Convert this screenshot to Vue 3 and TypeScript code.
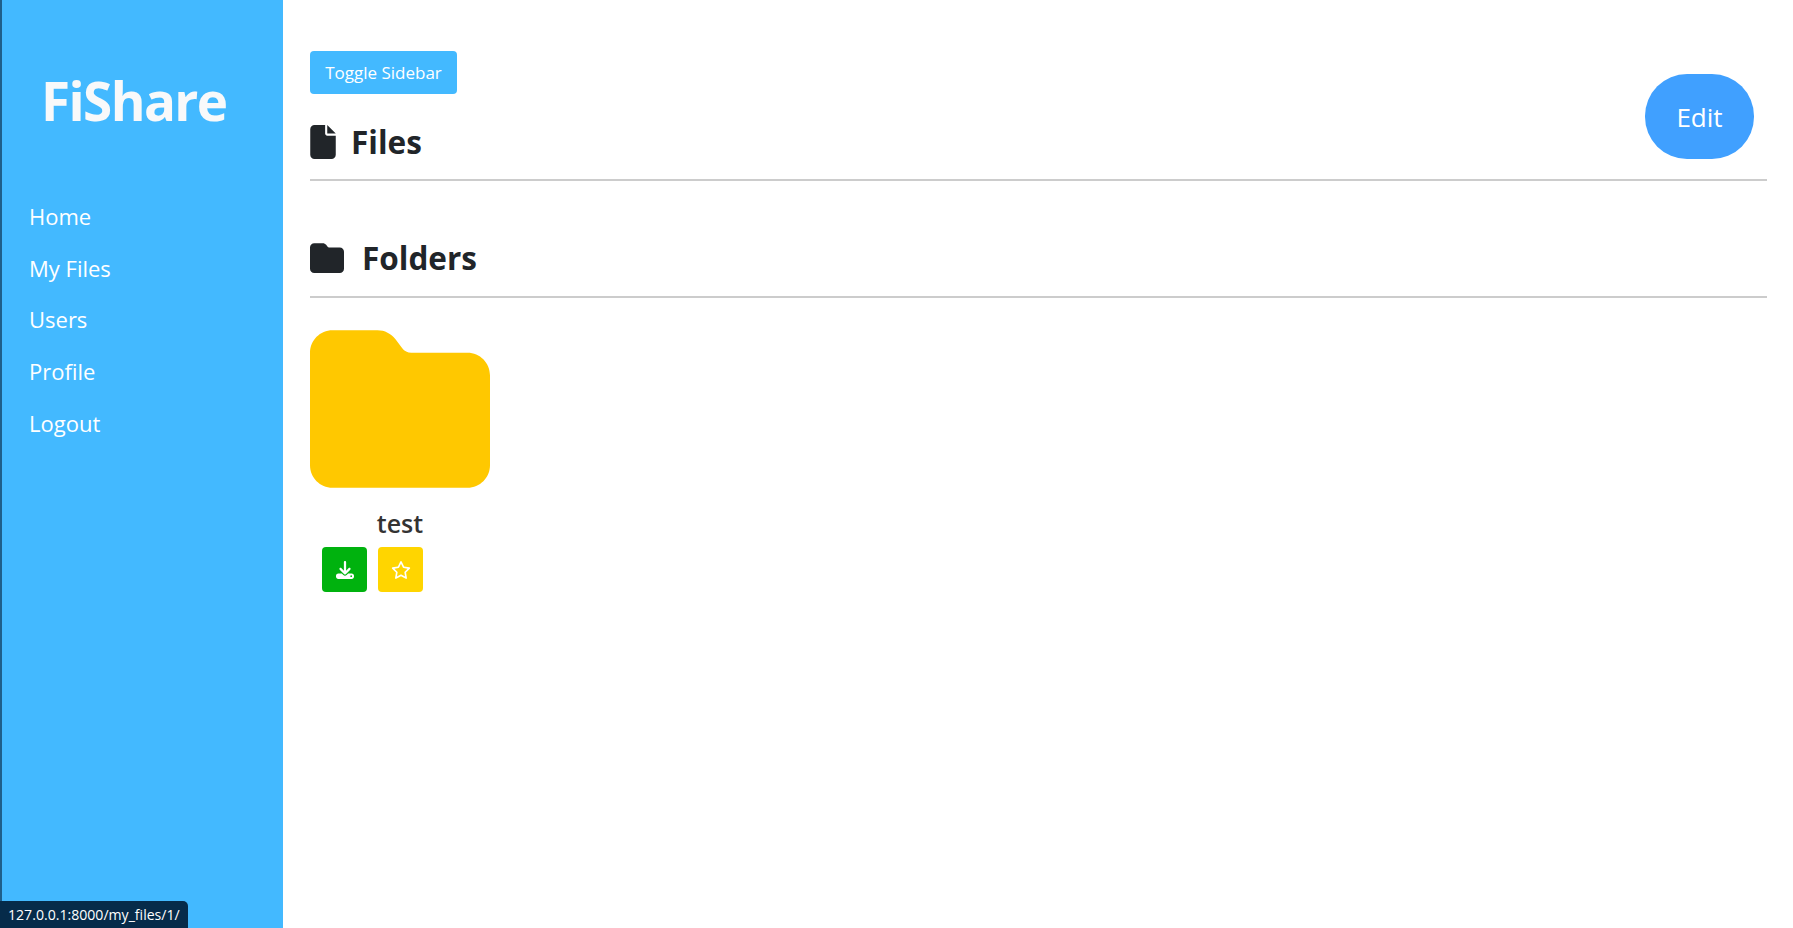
<script setup lang="ts">
interface FolderItem {
  name: string
}

const navLinks = ['Home', 'My Files', 'Users', 'Profile', 'Logout']
const folders: FolderItem[] = [{ name: 'test' }]
const folderPath =
  'M64 480H448c35.3 0 64-28.7 64-64V160c0-35.3-28.7-64-64-64H288c-10.1 0-19.6-4.7-25.6-12.8L243.2 57.6C231.1 41.5 212.1 32 192 32H64C28.7 32 0 60.7 0 96V416c0 35.3 28.7 64 64 64z'
</script>

<template>
  <div class="layout">
    <aside class="sidebar">
      <h1 class="brand">FiShare</h1>
      <nav class="nav">
        <a v-for="link in navLinks" :key="link" class="nav-link">{{ link }}</a>
      </nav>
    </aside>

    <main class="content">
      <button class="toggle-btn">Toggle Sidebar</button>

      <button class="edit-btn">Edit</button>

      <h2 class="section-title files-title">
        <svg class="file-icon" viewBox="0 0 384 512">
          <path fill="currentColor" d="M0 64C0 28.7 28.7 0 64 0H224V128c0 17.7 14.3 32 32 32H384V448c0 35.3-28.7 64-64 64H64c-35.3 0-64-28.7-64-64V64zm384 64H256V0L384 128z" />
        </svg>
        Files
      </h2>
      <hr class="rule" />

      <h2 class="section-title folders-title">
        <svg class="folder-icon" viewBox="0 0 512 512">
          <path fill="currentColor" :d="folderPath" />
        </svg>
        Folders
      </h2>
      <hr class="rule" />

      <div class="folder-grid">
        <div v-for="folder in folders" :key="folder.name" class="folder-card">
          <svg class="folder-big" viewBox="0 32 512 448">
            <path fill="#ffc800" :d="folderPath" />
          </svg>
          <div class="folder-name">{{ folder.name }}</div>
          <div class="folder-actions">
            <button class="action-btn download">
              <svg viewBox="0 0 512 512" width="18" height="18">
                <path fill="currentColor" d="M288 32c0-17.7-14.3-32-32-32s-32 14.3-32 32V274.7l-73.4-73.4c-12.5-12.5-32.8-12.5-45.3 0s-12.5 32.8 0 45.3l128 128c12.5 12.5 32.8 12.5 45.3 0l128-128c12.5-12.5 12.5-32.8 0-45.3s-32.8-12.5-45.3 0L288 274.7V32zM64 352c-35.3 0-64 28.7-64 64v32c0 35.3 28.7 64 64 64H448c35.3 0 64-28.7 64-64V416c0-35.3-28.7-64-64-64H346.5l-45.3 45.3c-25 25-65.5 25-90.5 0L165.5 352H64zm368 56a24 24 0 1 1 0 48 24 24 0 1 1 0-48z" />
              </svg>
            </button>
            <button class="action-btn star">
              <svg viewBox="0 0 576 512" width="20" height="18">
                <path fill="currentColor" d="M287.9 0c9.2 0 17.6 5.2 21.6 13.5l68.6 141.3 153.2 22.6c9 1.3 16.5 7.6 19.3 16.3s.5 18.1-5.9 24.5L433.6 328.4l26.2 155.6c1.5 9-2.2 18.1-9.6 23.5s-17.3 6-25.3 1.7l-137-73.2L151 509.1c-8.1 4.3-17.9 3.7-25.3-1.7s-11.2-14.5-9.7-23.5l26.2-155.6L31.1 218.2c-6.5-6.4-8.7-15.9-5.9-24.5s10.3-14.9 19.3-16.3l153.2-22.6L266.3 13.5C270.4 5.2 278.7 0 287.9 0zm0 79L235.4 187.2c-3.5 7.1-10.2 12.1-18.1 13.3L99 217.9 184.9 303c5.5 5.5 8.1 13.3 6.8 21L171.4 443.7l105.2-56.2c7.1-3.8 15.6-3.8 22.6 0l105.2 56.2L384.2 324.1c-1.3-7.7 1.2-15.5 6.8-21l85.9-85.1L358.6 200.5c-7.8-1.2-14.6-6.1-18.1-13.3L287.9 79z" />
              </svg>
            </button>
          </div>
        </div>
      </div>
    </main>

    <div class="status-bubble">127.0.0.1:8000/my_files/1/</div>
  </div>
</template>

<style scoped>
.layout {
  display: flex;
  height: 928px;
  overflow: hidden;
  position: relative;
  font-family: "Open Sans", "Noto Sans", sans-serif;
  color: #212529;
  background: #fff;
}

.sidebar {
  width: 281px;
  flex-shrink: 0;
  background: #43b9ff;
  border-left: 2px solid #1f5f8a;
  padding-top: 66px;
}

.brand {
  margin: 0 0 0 39px;
  font-size: 53px;
  line-height: 70px;
  font-weight: 700;
  letter-spacing: -1.6px;
  color: #f8f9fa;
}

.nav {
  display: flex;
  flex-direction: column;
  gap: 21.7px;
  margin-top: 65px;
  padding-left: 27px;
}

.nav-link {
  font-size: 22px;
  line-height: 30px;
  color: #fff;
}

.content {
  flex: 1;
  padding: 51px 26px 0 27px;
  position: relative;
}

.toggle-btn {
  display: block;
  width: 147px;
  height: 43px;
  padding: 0;
  border: none;
  border-radius: 4px;
  background: #43b9ff;
  color: #fff;
  font-family: inherit;
  font-size: 17px;
}

.edit-btn {
  position: absolute;
  top: 74px;
  right: 39px;
  width: 109px;
  height: 85px;
  border: none;
  border-radius: 42px;
  background: #40a0ff;
  color: #fff;
  font-family: inherit;
  font-size: 26px;
}

.section-title {
  display: flex;
  align-items: center;
  margin: 0;
  font-size: 31.5px;
  line-height: 44px;
  font-weight: 700;
}

.files-title {
  margin-top: 26px;
  margin-bottom: 15px;
  gap: 15px;
}

.folders-title {
  margin-top: 55px;
  margin-bottom: 16px;
  gap: 18px;
}

.file-icon {
  width: 26px;
  height: 34px;
}

.folder-icon {
  width: 34px;
  height: 34px;
}

.rule {
  margin: 0;
  border: none;
  height: 2px;
  background: #ccc;
}

.folder-grid {
  display: flex;
  margin-top: 32px;
}

.folder-card {
  width: 180px;
}

.folder-big {
  display: block;
  width: 180px;
  height: 158px;
}

.folder-name {
  margin-top: 18px;
  text-align: center;
  font-size: 25px;
  line-height: 34px;
  font-weight: 600;
  color: #333;
}

.folder-actions {
  display: flex;
  gap: 11px;
  margin-top: 7px;
  padding-left: 12px;
}

.action-btn {
  display: flex;
  align-items: center;
  justify-content: center;
  width: 45px;
  height: 45px;
  padding: 0;
  border: none;
  border-radius: 4px;
  color: #fff;
}

.download {
  background: #00b20e;
}

.star {
  background: #ffd500;
}

.status-bubble {
  position: absolute;
  left: 0;
  bottom: 0;
  width: 188px;
  height: 27px;
  box-sizing: border-box;
  padding-left: 8px;
  border-top-right-radius: 5px;
  background: #062b4a;
  color: #fff;
  font-size: 14.1px;
  line-height: 27px;
  white-space: nowrap;
}
</style>
